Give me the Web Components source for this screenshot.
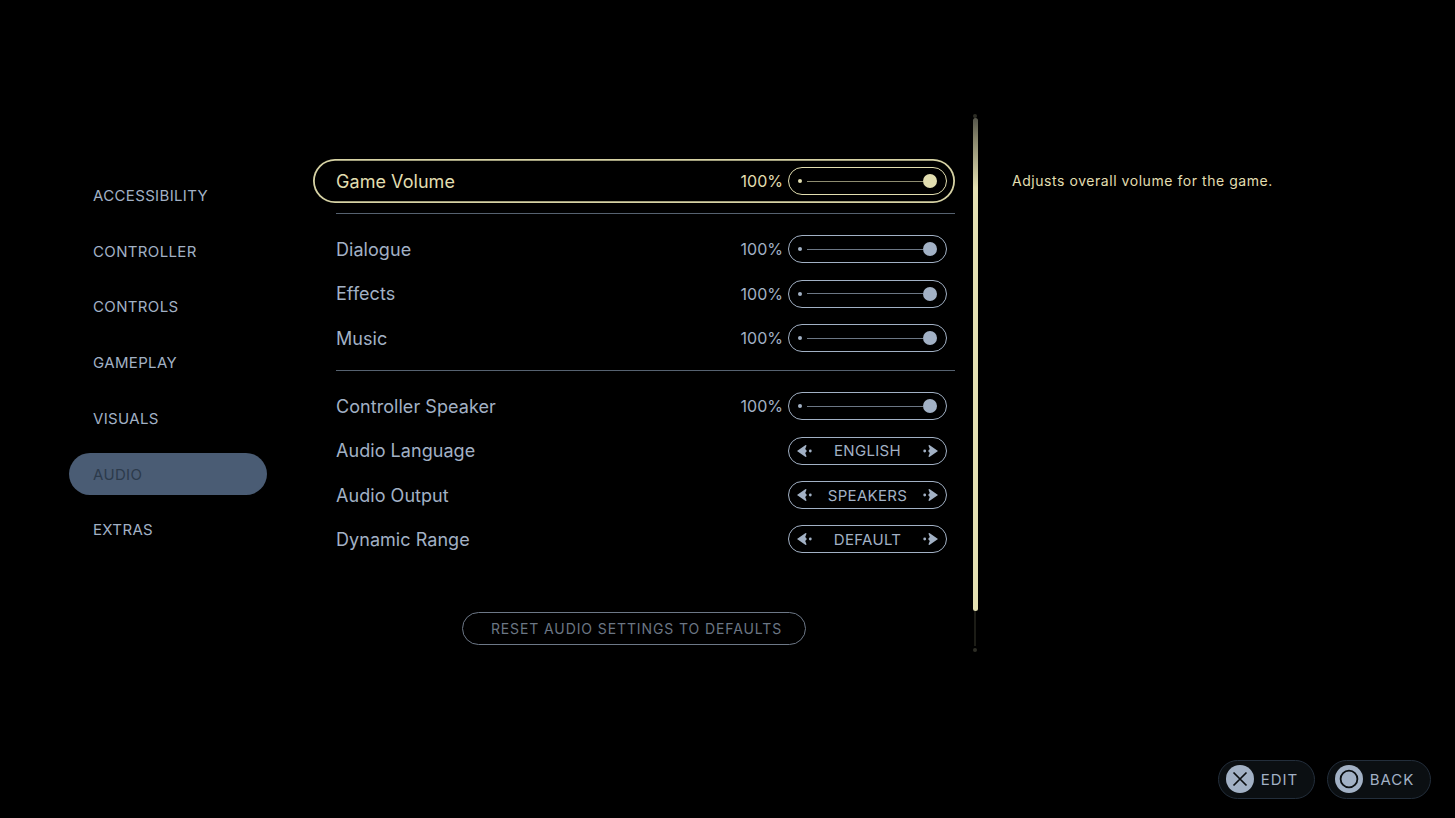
<!DOCTYPE html>
<html lang="en">
<head>
<meta charset="utf-8">
<title>Audio settings</title>
<style>
  html, body { margin: 0; height: 100%; background: #000; }
  body { font-family: "Inter", "Liberation Sans", sans-serif; color: #a2b1c5; }
</style>
</head>
<body>
<settings-page>
  <side-nav slot="nav">
    <nav-item>Accessibility</nav-item>
    <nav-item>Controller</nav-item>
    <nav-item>Controls</nav-item>
    <nav-item>Gameplay</nav-item>
    <nav-item>Visuals</nav-item>
    <nav-item active>Audio</nav-item>
    <nav-item>Extras</nav-item>
  </side-nav>

  <setting-row slot="list" label="Game Volume" selected><vol-slider value="100"></vol-slider></setting-row>
  <row-divider slot="list"></row-divider>
  <setting-row slot="list" label="Dialogue"><vol-slider value="100"></vol-slider></setting-row>
  <setting-row slot="list" label="Effects"><vol-slider value="100"></vol-slider></setting-row>
  <setting-row slot="list" label="Music"><vol-slider value="100"></vol-slider></setting-row>
  <row-divider slot="list"></row-divider>
  <setting-row slot="list" label="Controller Speaker"><vol-slider value="100"></vol-slider></setting-row>
  <setting-row slot="list" label="Audio Language"><option-picker>English</option-picker></setting-row>
  <setting-row slot="list" label="Audio Output"><option-picker>Speakers</option-picker></setting-row>
  <setting-row slot="list" label="Dynamic Range"><option-picker>Default</option-picker></setting-row>
  <reset-button slot="list">Reset Audio Settings to Defaults</reset-button>

  <scroll-track slot="scroll"></scroll-track>
  <span slot="hint">Adjusts overall volume for the game.</span>

  <hint-button slot="footer" glyph="cross">Edit</hint-button>
  <hint-button slot="footer" glyph="circle">Back</hint-button>
</settings-page>

<script>
function shadow(el, html) {
  el.attachShadow({ mode: 'open' }).innerHTML = html;
}

class SettingsPage extends HTMLElement {
  constructor() {
    super();
    shadow(this, `
      <style>
        :host { display: flex; flex-direction: column; height: 818px; box-sizing: border-box; padding-top: 114px; }
        .main { display: flex; align-items: flex-start; }
        .nav { display: block; margin: 60.3px 0 0 69px; width: 198px; }
        .list { display: flex; flex-direction: column; margin: 45px 0 0 46px; width: 642px; }
        .scroll { display: block; margin-left: 17.5px; }
        .hint { margin: 58px 0 0 34px; font-size: 14px; line-height: 17px; letter-spacing: .55px; color: #e2deb0; }
        .footer { display: flex; justify-content: flex-end; gap: 12px; margin-top: auto; padding: 0 24px 19px 0; }
      </style>
      <div class="main">
        <div class="nav"><slot name="nav"></slot></div>
        <div class="list"><slot name="list"></slot></div>
        <div class="scroll"><slot name="scroll"></slot></div>
        <div class="hint"><slot name="hint"></slot></div>
      </div>
      <div class="footer"><slot name="footer"></slot></div>`);
  }
}

class SideNav extends HTMLElement {
  constructor() {
    super();
    shadow(this, `
      <style>:host { display: flex; flex-direction: column; gap: 13.75px; }</style>
      <slot></slot>`);
  }
}

class NavItem extends HTMLElement {
  constructor() {
    super();
    shadow(this, `
      <style>
        :host { display: flex; align-items: center; height: 42px; padding-left: 24px; border-radius: 21px;
                font-size: 15px; letter-spacing: .35px; text-transform: uppercase; color: #a2b1c5; }
        :host([active]) { background: #4a5c74; color: #2c3a4b; }
      </style>
      <slot></slot>`);
  }
}

class SettingRow extends HTMLElement {
  constructor() {
    super();
    shadow(this, `
      <style>
        :host { display: flex; align-items: center; height: 44.33px; box-sizing: border-box; padding: 0 8px 0 23px;
                border-radius: 22px; font-size: 18px; letter-spacing: .05px; color: #a2b1c5; --line: #a2b1c5; --track: #6c7785; }
        :host([selected]) { box-shadow: inset 0 0 0 1.8px #d6d2a4; color: #e2deb0; --line: #e2deb0; --track: #8e8c70; }
        .label { flex: 1; }
      </style>
      <span class="label"></span><slot></slot>`);
    this.shadowRoot.querySelector('.label').textContent = this.getAttribute('label');
  }
}

class RowDivider extends HTMLElement {
  constructor() {
    super();
    shadow(this, `
      <style>:host { display: block; height: 1px; margin: 10px 0 13px 23px; background: #566270; }</style>`);
  }
}

class VolSlider extends HTMLElement {
  constructor() {
    super();
    shadow(this, `
      <style>
        :host { display: flex; align-items: center; gap: 5px; font-size: 16px; letter-spacing: 0; }
        .box { display: flex; align-items: center; box-sizing: border-box; width: 159px; height: 28px; padding: 0 9px 0 9px;
               border: 1.4px solid var(--line); border-radius: 14px; }
        .dot { width: 4px; height: 4px; border-radius: 50%; background: var(--line); }
        .track { flex: 1; height: 1px; margin-left: 5px; background: var(--track); }
        .knob { width: 14px; height: 14px; border-radius: 50%; background: var(--line); }
      </style>
      <span class="val"></span>
      <div class="box"><span class="dot"></span><span class="track"></span><span class="knob"></span></div>`);
    this.shadowRoot.querySelector('.val').textContent = this.getAttribute('value') + '%';
  }
}

class OptionPicker extends HTMLElement {
  constructor() {
    super();
    const arrow = '<path d="M0 6 L8.6 0 L9.6 .6 L8.2 4 L9.9 6 L8.2 8 L9.6 11.4 L8.6 12 Z"/><circle cx="13.3" cy="6" r="1.4"/>';
    shadow(this, `
      <style>
        :host { display: flex; align-items: center; justify-content: space-between; box-sizing: border-box; width: 159px; height: 28px;
                padding: 0 8px; border: 1.4px solid var(--line); border-radius: 14px; font-size: 15px; letter-spacing: .32px; text-transform: uppercase; }
        svg { width: 15px; height: 12px; fill: var(--line); flex: none; }
        .r { transform: scaleX(-1); }
      </style>
      <svg viewBox="0 0 15 12">${arrow}</svg><slot></slot><svg class="r" viewBox="0 0 15 12">${arrow}</svg>`);
  }
}

class ResetButton extends HTMLElement {
  constructor() {
    super();
    shadow(this, `
      <style>
        :host { display: flex; align-items: center; justify-content: center; align-self: center; box-sizing: border-box;
                width: 344px; height: 33px; margin-top: 50px; padding-left: 5px; border: 1.3px solid #6d7887; border-radius: 17px;
                font-size: 14px; letter-spacing: .9px; text-transform: uppercase; color: #6b7684; }
      </style>
      <slot></slot>`);
  }
}

class ScrollTrack extends HTMLElement {
  constructor() {
    super();
    shadow(this, `
      <style>
        :host { display: block; position: relative; width: 5.5px; height: 538px; }
        .rail { position: absolute; left: 1.75px; top: 2px; bottom: 6px; width: 2px; background: #1c1c16; }
        .cap { position: absolute; left: .75px; width: 4px; height: 4px; border-radius: 50%; background: #2d2d25; }
        .thumb { position: absolute; left: 0; top: 4px; width: 5.5px; height: 493px; border-radius: 2.75px;
                 background: linear-gradient(#55554a 0, #85836a 20px, #e4e0b2 70px); }
      </style>
      <div class="rail"></div><div class="cap" style="top:0"></div><div class="cap" style="bottom:0"></div><div class="thumb"></div>`);
  }
}

class HintButton extends HTMLElement {
  constructor() {
    super();
    const glyph = this.getAttribute('glyph') === 'cross'
      ? '<path d="M7.5 7.5 L20.5 20.5 M20.5 7.5 L7.5 20.5" stroke="#0b0f12" stroke-width="1.7" fill="none"/>'
      : '<circle cx="14" cy="14" r="8.4" stroke="#0b0f12" stroke-width="1.8" fill="none"/>';
    shadow(this, `
      <style>
        :host { display: flex; align-items: center; gap: 7px; box-sizing: border-box; height: 39.5px; padding: 0 15.7px 0 6.7px;
                background: #0b0f12; border: 1.3px solid #232e3b; border-radius: 20px;
                font-size: 15px; letter-spacing: 1px; text-transform: uppercase; color: #a2b1c5; }
        svg { width: 28px; height: 28px; flex: none; }
      </style>
      <svg viewBox="0 0 28 28"><circle cx="14" cy="14" r="14" fill="#a2b1c5"/>${glyph}</svg><slot></slot>`);
  }
}

customElements.define('settings-page', SettingsPage);
customElements.define('side-nav', SideNav);
customElements.define('nav-item', NavItem);
customElements.define('setting-row', SettingRow);
customElements.define('row-divider', RowDivider);
customElements.define('vol-slider', VolSlider);
customElements.define('option-picker', OptionPicker);
customElements.define('reset-button', ResetButton);
customElements.define('scroll-track', ScrollTrack);
customElements.define('hint-button', HintButton);
</script>
</body>
</html>
